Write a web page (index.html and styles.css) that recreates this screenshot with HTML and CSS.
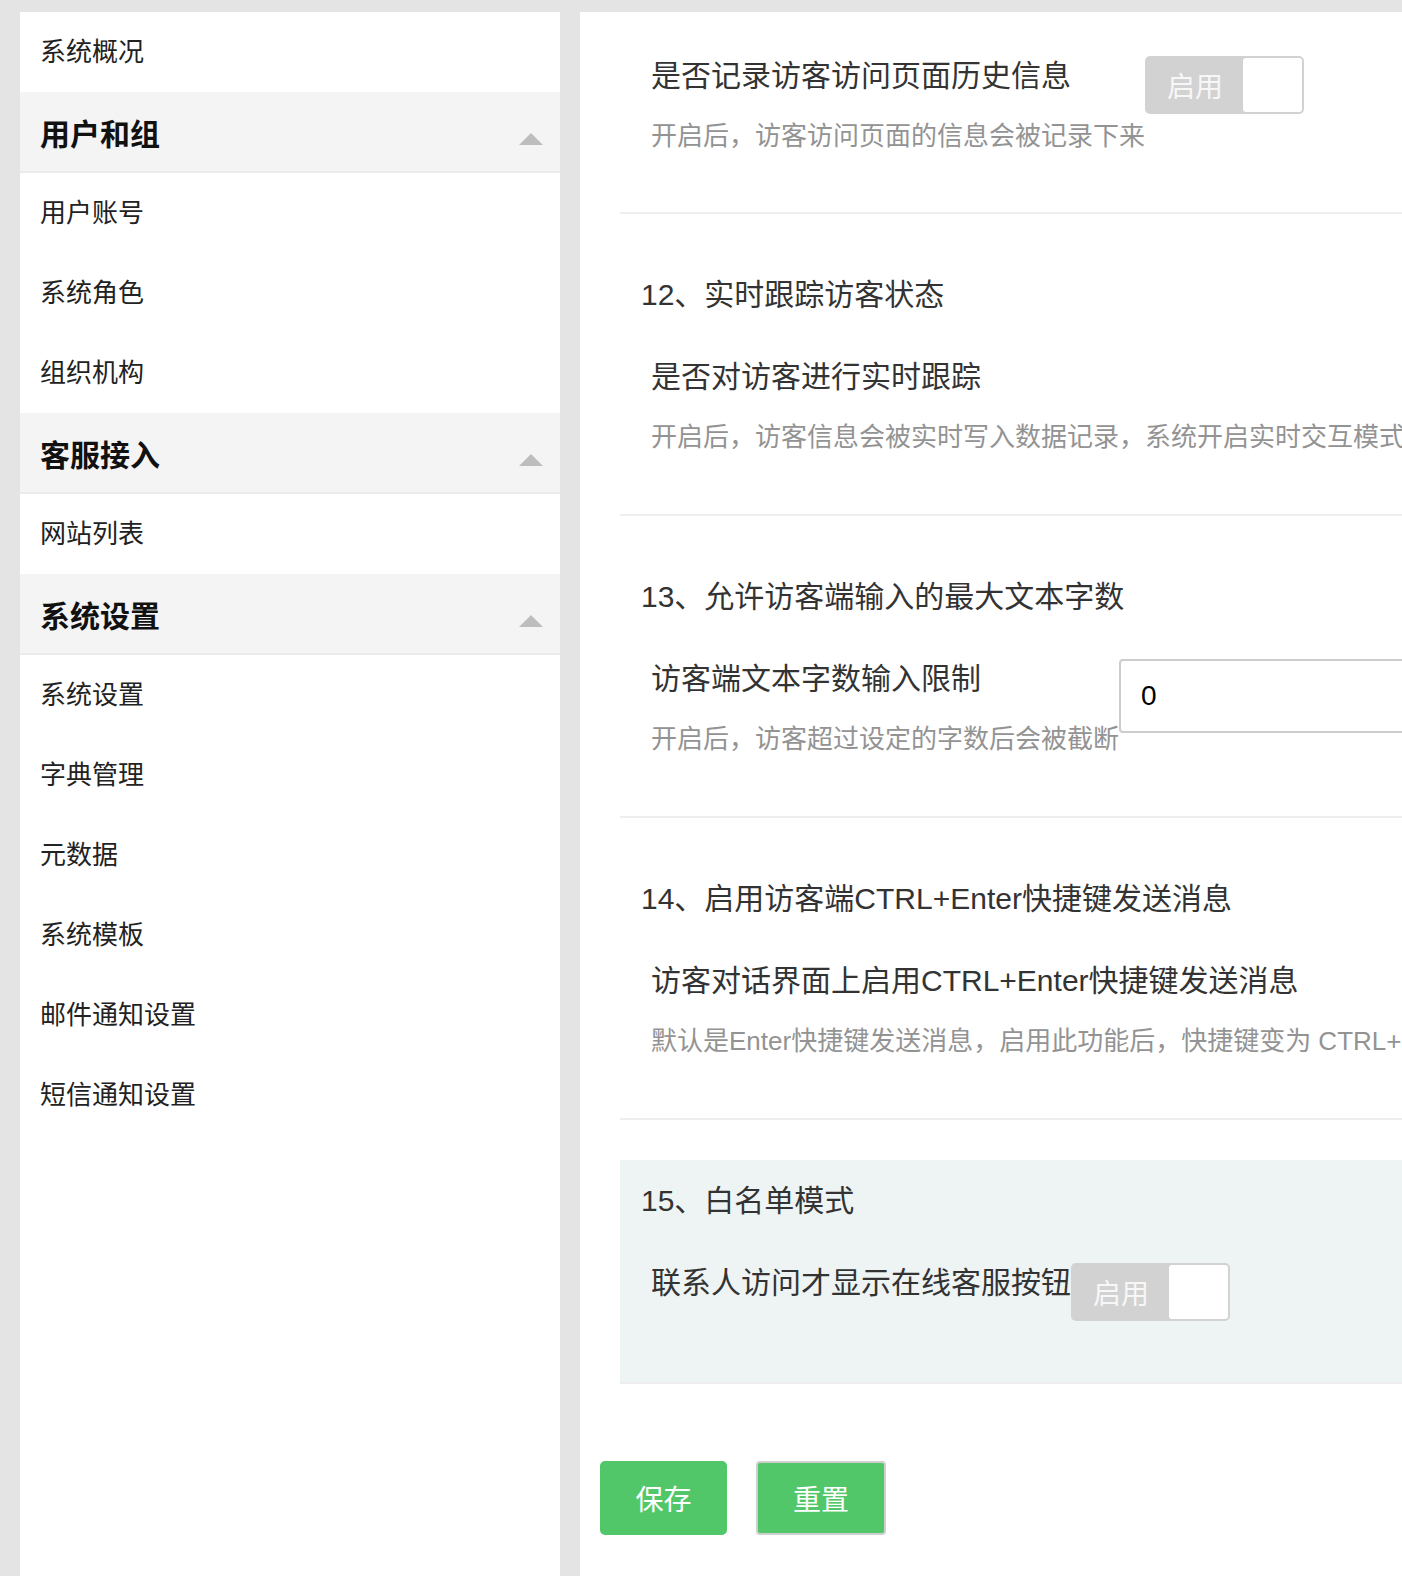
FILE: index.html
```html
<!DOCTYPE html>
<html lang="zh-CN">
<head>
<meta charset="utf-8">
<title>系统设置</title>
<link rel="stylesheet" href="styles.css">
</head>
<body>
<div class="page">
  <aside class="sidebar">
    <div class="nav-item">系统概况</div>
    <div class="nav-group"><span>用户和组</span><i class="caret"></i></div>
    <div class="nav-item">用户账号</div>
    <div class="nav-item">系统角色</div>
    <div class="nav-item">组织机构</div>
    <div class="nav-group"><span>客服接入</span><i class="caret"></i></div>
    <div class="nav-item">网站列表</div>
    <div class="nav-group"><span>系统设置</span><i class="caret"></i></div>
    <div class="nav-item">系统设置</div>
    <div class="nav-item">字典管理</div>
    <div class="nav-item">元数据</div>
    <div class="nav-item">系统模板</div>
    <div class="nav-item">邮件通知设置</div>
    <div class="nav-item">短信通知设置</div>
  </aside>
  <main class="main">
    <section class="row row-first">
      <div class="field">
        <div class="text">
          <div class="label">是否记录访客访问页面历史信息</div>
          <div class="desc">开启后，访客访问页面的信息会被记录下来</div>
        </div>
        <div class="switch"><span class="switch-text">启用</span><span class="switch-knob"></span></div>
      </div>
    </section>
    <section class="row">
      <div class="title">12、实时跟踪访客状态</div>
      <div class="field">
        <div class="text">
          <div class="label">是否对访客进行实时跟踪</div>
          <div class="desc">开启后，访客信息会被实时写入数据记录，系统开启实时交互模式</div>
        </div>
        <div class="switch"><span class="switch-text">启用</span><span class="switch-knob"></span></div>
      </div>
    </section>
    <section class="row">
      <div class="title">13、允许访客端输入的最大文本字数</div>
      <div class="field">
        <div class="text">
          <div class="label">访客端文本字数输入限制</div>
          <div class="desc">开启后，访客超过设定的字数后会被截断</div>
        </div>
        <div class="input">0</div>
      </div>
    </section>
    <section class="row">
      <div class="title">14、启用访客端CTRL+Enter快捷键发送消息</div>
      <div class="field">
        <div class="text">
          <div class="label">访客对话界面上启用CTRL+Enter快捷键发送消息</div>
          <div class="desc">默认是Enter快捷键发送消息，启用此功能后，快捷键变为 CTRL+Enter</div>
        </div>
        <div class="switch"><span class="switch-text">启用</span><span class="switch-knob"></span></div>
      </div>
    </section>
    <section class="row row-active">
      <div class="title">15、白名单模式</div>
      <div class="field">
        <div class="text">
          <div class="label">联系人访问才显示在线客服按钮</div>
        </div>
        <div class="switch"><span class="switch-text">启用</span><span class="switch-knob"></span></div>
      </div>
    </section>
    <div class="actions">
      <button class="btn">保存</button>
      <button class="btn btn-reset">重置</button>
    </div>
  </main>
</div>
</body>
</html>
```
FILE: styles.css
```css
html, body {
  margin: 0;
  padding: 0;
  height: 1576px;
  overflow: hidden;
}
body {
  background: #e4e4e4;
  font-family: "Liberation Sans", "Noto Sans CJK SC", sans-serif;
  color: #333;
}
.page {
  display: flex;
  gap: 20px;
  padding: 12px 0 0 20px;
  height: 1564px;
}
.sidebar {
  width: 540px;
  flex-shrink: 0;
  background: #fff;
}
.nav-item {
  height: 74px;
  padding: 0 0 6px 20px;
  display: flex;
  align-items: center;
  font-size: 26px;
  color: #222;
}
.nav-group {
  height: 79px;
  border-bottom: 2px solid #ebebeb;
  background: #f4f4f4;
  display: flex;
  align-items: center;
  justify-content: space-between;
  padding: 0 17px 0 20px;
  font-size: 30px;
  font-weight: bold;
  color: #111;
}
.caret {
  width: 0;
  height: 0;
  border-left: 12px solid transparent;
  border-right: 12px solid transparent;
  border-bottom: 12px solid #bdbdbd;
  margin-top: 14px;
}
.main {
  width: 1100px;
  flex-shrink: 0;
  background: #fff;
  padding-left: 20px;
}
.row {
  margin-left: 20px;
  padding: 21px 0 57px 21px;
  border-bottom: 2px solid #eeeeee;
  margin-top: 40px;
}
.row-first {
  margin-top: 0;
  padding-top: 44px;
  padding-bottom: 56px;
}
.row-first .field {
  margin-top: 0;
}
.row-active {
  background: #eef4f4;
  padding-bottom: 61px;
}
.title {
  font-size: 30px;
  line-height: 40px;
  color: #333;
  white-space: nowrap;
}
.field {
  display: flex;
  align-items: flex-start;
  margin-top: 42px;
  padding-left: 10px;
}
.text {
  flex-shrink: 0;
}
.label {
  font-size: 30px;
  line-height: 40px;
  color: #333;
  white-space: nowrap;
}
.desc {
  margin-top: 20px;
  font-size: 26px;
  line-height: 40px;
  color: #939393;
  white-space: nowrap;
}
.switch {
  flex-shrink: 0;
  display: flex;
  width: 155px;
  height: 54px;
  padding: 2px;
  background: #d2d2d2;
  border-radius: 5px;
}
.switch-text {
  width: 96px;
  display: flex;
  align-items: center;
  justify-content: center;
  font-size: 28px;
  color: #f7f7f7;
}
.switch-knob {
  flex: 1;
  background: #fff;
  border-radius: 3px;
}
.input {
  flex-shrink: 0;
  width: 400px;
  height: 70px;
  border: 2px solid #cccccc;
  border-radius: 4px;
  display: flex;
  align-items: center;
  padding-left: 20px;
  font-size: 28px;
  color: #000;
}
.actions {
  display: flex;
  gap: 29px;
  margin-top: 77px;
}
.btn {
  width: 127px;
  height: 74px;
  border: none;
  border-radius: 5px;
  background: #52c76a;
  color: #fff;
  font-family: "Liberation Sans", "Noto Sans CJK SC", sans-serif;
  font-size: 28px;
  padding: 0;
}
.btn-reset {
  width: 130px;
  border: 2px solid #cfcfcf;
  border-radius: 4px;
}
```
